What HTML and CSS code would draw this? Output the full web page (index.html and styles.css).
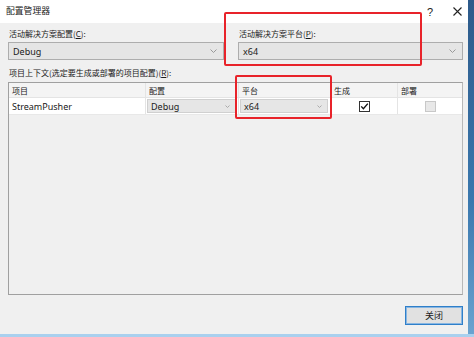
FILE: index.html
```html
<!DOCTYPE html>
<html lang="zh-CN">
<head>
  <meta charset="UTF-8">
  <title>配置管理器</title>
  <link rel="stylesheet" href="styles.css">
</head>
<body>
  <div class="window">
    <div class="main">
      <div class="titlebar">
        <span class="title-text">配置管理器</span>
        <span class="title-btns">
          <span class="help">?</span>
          <svg class="close-x" width="9" height="9" viewBox="0 0 9 9"><path d="M0.5 0.5L8.5 8.5M8.5 0.5L0.5 8.5" stroke="#222" stroke-width="1.1"/></svg>
        </span>
      </div>

      <div class="body">
        <div class="top-row">
          <div class="field left-field">
            <div class="label">活动解决方案配置(<u>C</u>):</div>
            <div class="combo">
              <span class="en">Debug</span>
              <svg class="arrow" width="7" height="4" viewBox="0 0 7 4"><path d="M0.5 0.5L3.5 3.5L6.5 0.5" fill="none" stroke="#999"/></svg>
            </div>
          </div>
          <div class="field right-field">
            <div class="label">活动解决方案平台(<u>P</u>):</div>
            <div class="combo">
              <span class="en">x64</span>
              <svg class="arrow" width="7" height="4" viewBox="0 0 7 4"><path d="M0.5 0.5L3.5 3.5L6.5 0.5" fill="none" stroke="#999"/></svg>
            </div>
          </div>
        </div>

        <div class="label ctx-label">项目上下文(选定要生成或部署的项目配置)(<u>R</u>):</div>

        <div class="grid">
          <div class="row head">
            <div class="cell c1">项目</div>
            <div class="cell c2">配置</div>
            <div class="cell c3">平台</div>
            <div class="cell c4">生成</div>
            <div class="cell c5">部署</div>
          </div>
          <div class="row data">
            <div class="cell c1 en">StreamPusher</div>
            <div class="cell c2"><div class="mini-combo"><span class="en">Debug</span><svg width="5" height="3" viewBox="0 0 5 3"><path d="M0.5 0.5L2.5 2.5L4.5 0.5" fill="none" stroke="#aaa"/></svg></div></div>
            <div class="cell c3"><div class="mini-combo"><span class="en">x64</span><svg width="5" height="3" viewBox="0 0 5 3"><path d="M0.5 0.5L2.5 2.5L4.5 0.5" fill="none" stroke="#aaa"/></svg></div></div>
            <div class="cell c4 center">
              <svg width="11" height="11" viewBox="0 0 11 11"><rect x="0.5" y="0.5" width="10" height="10" fill="#fff" stroke="#333"/><path d="M2.2 5.4L4.4 7.8L8.8 2.6" fill="none" stroke="#111" stroke-width="1.4"/></svg>
            </div>
            <div class="cell c5 center">
              <svg width="11" height="11" viewBox="0 0 11 11"><rect x="0.5" y="0.5" width="10" height="10" fill="#e8e8e8" stroke="#c8c8c8"/></svg>
            </div>
          </div>
        </div>

        <div class="footer">
          <button class="btn">关闭</button>
        </div>
      </div>

      <div class="mark mark-top"></div>
      <div class="mark mark-grid"></div>
    </div>
    <div class="edge"></div>
  </div>
</body>
</html>
```

FILE: styles.css
```css
* {
  box-sizing: border-box;
}

body {
  margin: 0;
  width: 474px;
  height: 337px;
  overflow: hidden;
  font-family: "Noto Sans CJK SC", "Noto Sans", sans-serif;
  font-size: 8px;
  color: #1a1a1a;
  background: #f0f0f0;
}

.en {
  font-family: "Noto Sans", "Noto Sans CJK SC", sans-serif;
  font-size: 9px;
}

.window {
  display: flex;
  height: 337px;
  border-bottom: 3px solid #a9d0ee;
}

.main {
  position: relative;
  flex: 1;
  display: flex;
  flex-direction: column;
  background: #f0f0f0;
}

.edge {
  width: 6px;
  background: linear-gradient(#2d5a8a, #3a78ae 60%, #6aa3d0);
}

.titlebar {
  height: 23px;
  background: #fff;
  display: flex;
  align-items: center;
  justify-content: space-between;
  padding: 0 6px 0 6px;
}

.title-text {
  font-size: 8.8px;
  line-height: 1;
}

.title-btns {
  display: flex;
  align-items: center;
  gap: 20px;
}

.help {
  font-family: "Liberation Sans", sans-serif;
  font-size: 11px;
}

.body {
  flex: 1;
  display: flex;
  flex-direction: column;
  padding: 5px 5px 9px 8px;
}

.top-row {
  display: flex;
  gap: 14px;
}

.field {
  display: flex;
  flex-direction: column;
}

.left-field {
  width: 216px;
}

.right-field {
  flex: 1;
}

.label {
  height: 12px;
  line-height: 12px;
  padding-left: 1px;
}

.combo {
  margin-top: 2px;
  height: 18px;
  border: 1px solid #adadad;
  background: #e5e5e5;
  display: flex;
  align-items: center;
  justify-content: space-between;
  padding: 0 6px 0 4px;
}

.ctx-label {
  margin-top: 7px;
}

.grid {
  margin-top: 3px;
  height: 213px;
  border: 1px solid #a0a0a0;
  border-right-color: #b8b8b8;
  background: #f0f0f0;
}

.row {
  display: flex;
}

.head {
  height: 15px;
  background: #f4f4f4;
  border-bottom: 1px solid #e4e4e4;
}

.data {
  height: 17px;
  background: #fff;
  border-bottom: 1px solid #e8e8e8;
}

.cell {
  display: flex;
  align-items: center;
  padding-left: 3px;
  border-right: 1px solid #e4e4e4;
}

.c1 { width: 137px; }
.c2 { width: 93px; }
.c3 { width: 92px; }
.c4 { width: 67px; }
.c5 { flex: 1; border-right: none; }

.center {
  justify-content: center;
  padding-left: 0;
}

.data .c2,
.data .c3 {
  padding: 1px 2px 1px 1px;
}

.mini-combo {
  flex: 1;
  height: 100%;
  background: #e6e6e6;
  border: 1px solid #d0d0d0;
  display: flex;
  align-items: center;
  justify-content: space-between;
  padding: 0 5px 0 3px;
}

.footer {
  margin-top: auto;
  display: flex;
  justify-content: flex-end;
}

.btn {
  width: 58px;
  height: 19px;
  border: 1px solid #2f7fc9;
  box-shadow: inset 0 0 0 1px #88b6e2;
  background: #e1e1e1;
  font-family: "Noto Sans CJK SC", sans-serif;
  font-size: 9px;
  color: #1a1a1a;
  padding: 0;
}

/* red highlight boxes drawn over the dialog */
.mark {
  position: absolute;
  border: 2px solid #e8232a;
  border-radius: 2px;
  pointer-events: none;
}

.mark-top {
  left: 224px;
  top: 12px;
  width: 198px;
  height: 54px;
}

.mark-grid {
  left: 235px;
  top: 75px;
  width: 97px;
  height: 44px;
}
```
